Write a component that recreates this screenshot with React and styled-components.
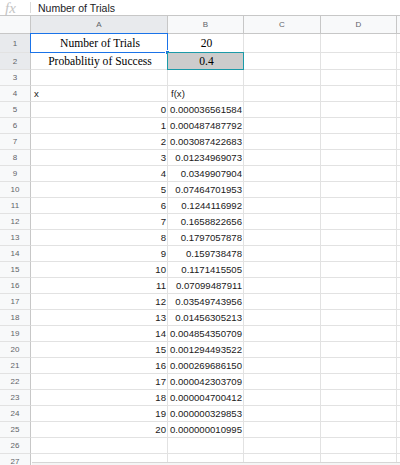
import styled, { createGlobalStyle, css } from "styled-components"

const GlobalStyle = createGlobalStyle`
    html, body {
        margin: 0;
        padding: 0;
        background: #ffffff;
    }
    * {
        box-sizing: border-box;
    }
`

const COLS = "31px 137px 76px 77px 76px 80px"

const Sheet = styled.div`
    position: relative;
    width: 400px;
    height: 465px;
    overflow: hidden;
    background: #ffffff;
    font-family: "Liberation Sans", Arial, sans-serif;
`

const FormulaBar = styled.div`
    display: flex;
    align-items: center;
    height: 16px;
    border-bottom: 1px solid #c7c7c7;
`

const FxLabel = styled.div`
    width: 30px;
    padding-left: 5px;
    font-family: "Liberation Serif", serif;
    font-style: italic;
    font-size: 15px;
    color: #c4c4c4;
    line-height: 14px;
`

const FxDivider = styled.div`
    width: 1px;
    height: 11px;
    background: #dadada;
`

const FxValue = styled.div`
    padding-left: 7px;
    font-family: "Liberation Sans", Arial, sans-serif;
    font-size: 10.5px;
    color: #202124;
`

const Row = styled.div`
    display: grid;
    grid-template-columns: ${COLS};
    height: ${({$h}) => $h}px;
`

const Cell = styled.div`
    position: relative;
    display: flex;
    align-items: center;
    justify-content: ${({$align}) => $align === "right" ? "flex-end" : $align === "center" ? "center" : "flex-start"};
    padding: 0 1px 0 3px;
    border-right: 1px solid #e2e2e2;
    border-bottom: 1px solid #e2e2e2;
    font-size: 9.6px;
    color: #1a1a1a;
    white-space: nowrap;
    overflow: visible;
    background: ${({$fill}) => $fill || "transparent"};

    ${({$serif}) => $serif && css`
        font-family: "Liberation Serif", "Times New Roman", serif;
        font-size: 11.6px;
        color: #000000;
    `}
`

const HeadCell = styled.div`
    display: flex;
    align-items: center;
    justify-content: center;
    background: ${({$active}) => $active ? "#e8eaed" : "#f8f9fa"};
    border-right: 1px solid #c7c7c7;
    border-bottom: 1px solid #c7c7c7;
    font-size: 8px;
    color: #5f6368;
`

const RowNum = styled.div`
    display: flex;
    align-items: center;
    justify-content: center;
    background: ${({$active}) => $active ? "#e8eaed" : "#f8f9fa"};
    border-right: 1px solid #c7c7c7;
    border-bottom: 1px solid #e2e2e2;
    font-size: 8px;
    color: #5f6368;
`

const Selection = styled.div`
    position: absolute;
    left: -1px;
    top: -1px;
    right: -1px;
    bottom: -1px;
    border: 1.5px solid #1a73e8;
    pointer-events: none;
`

const FillHandle = styled.div`
    position: absolute;
    right: -3px;
    bottom: -3px;
    width: 5px;
    height: 5px;
    background: #1a73e8;
    border: 1px solid #ffffff;
`

const PeerBox = styled.div`
    position: absolute;
    left: -1px;
    top: -1px;
    right: -1px;
    bottom: -1px;
    border: 1.5px solid #1b9aa8;
    pointer-events: none;
`

const ScrollTrack = styled.div`
    position: absolute;
    left: 32px;
    right: 0;
    bottom: 0;
    height: 3px;
    border-top: 1px solid #d6d6d6;
    background: #f5f5f5;
`

const values = [
    "0.000036561584", "0.000487487792", "0.003087422683", "0.01234969073",
    "0.0349907904", "0.07464701953", "0.1244116992", "0.1658822656",
    "0.1797057878", "0.159738478", "0.1171415505", "0.07099487911",
    "0.03549743956", "0.01456305213", "0.004854350709", "0.001294493522",
    "0.000269686150", "0.000042303709", "0.000004700412", "0.000000329853",
    "0.000000010995",
]

const Blank = () => (
    <>
        <Cell />
        <Cell />
        <Cell />
        <Cell />
    </>
)

export default function App() {
    return (
        <Sheet>
            <GlobalStyle />
            <FormulaBar>
                <FxLabel>fx</FxLabel>
                <FxDivider />
                <FxValue>Number of Trials</FxValue>
            </FormulaBar>

            <Row $h={18}>
                <HeadCell />
                <HeadCell $active>A</HeadCell>
                <HeadCell>B</HeadCell>
                <HeadCell>C</HeadCell>
                <HeadCell>D</HeadCell>
                <HeadCell />
            </Row>

            <Row $h={19}>
                <RowNum $active>1</RowNum>
                <Cell $serif $align="center">
                    Number of Trials
                    <Selection><FillHandle /></Selection>
                </Cell>
                <Cell $serif $align="center">20</Cell>
                <Cell />
                <Cell />
                <Cell />
            </Row>

            <Row $h={17}>
                <RowNum $active>2</RowNum>
                <Cell $serif $align="center">Probablitiy of Success</Cell>
                <Cell $serif $align="center" $fill="#cccccc">
                    0.4
                    <PeerBox />
                </Cell>
                <Cell />
                <Cell />
                <Cell />
            </Row>

            <Row $h={16}>
                <RowNum>3</RowNum>
                <Cell />
                <Blank />
            </Row>

            <Row $h={16}>
                <RowNum>4</RowNum>
                <Cell>x</Cell>
                <Cell>f(x)</Cell>
                <Cell />
                <Cell />
                <Cell />
            </Row>

            {values.map((v, i) => (
                <Row $h={16} key={i}>
                    <RowNum>{i + 5}</RowNum>
                    <Cell $align="right">{i}</Cell>
                    <Cell $align="right">{v}</Cell>
                    <Cell />
                    <Cell />
                    <Cell />
                </Row>
            ))}

            <Row $h={16}>
                <RowNum>26</RowNum>
                <Cell />
                <Blank />
            </Row>
            <Row $h={16}>
                <RowNum>27</RowNum>
                <Cell />
                <Blank />
            </Row>

            <ScrollTrack />
        </Sheet>
    )
}
